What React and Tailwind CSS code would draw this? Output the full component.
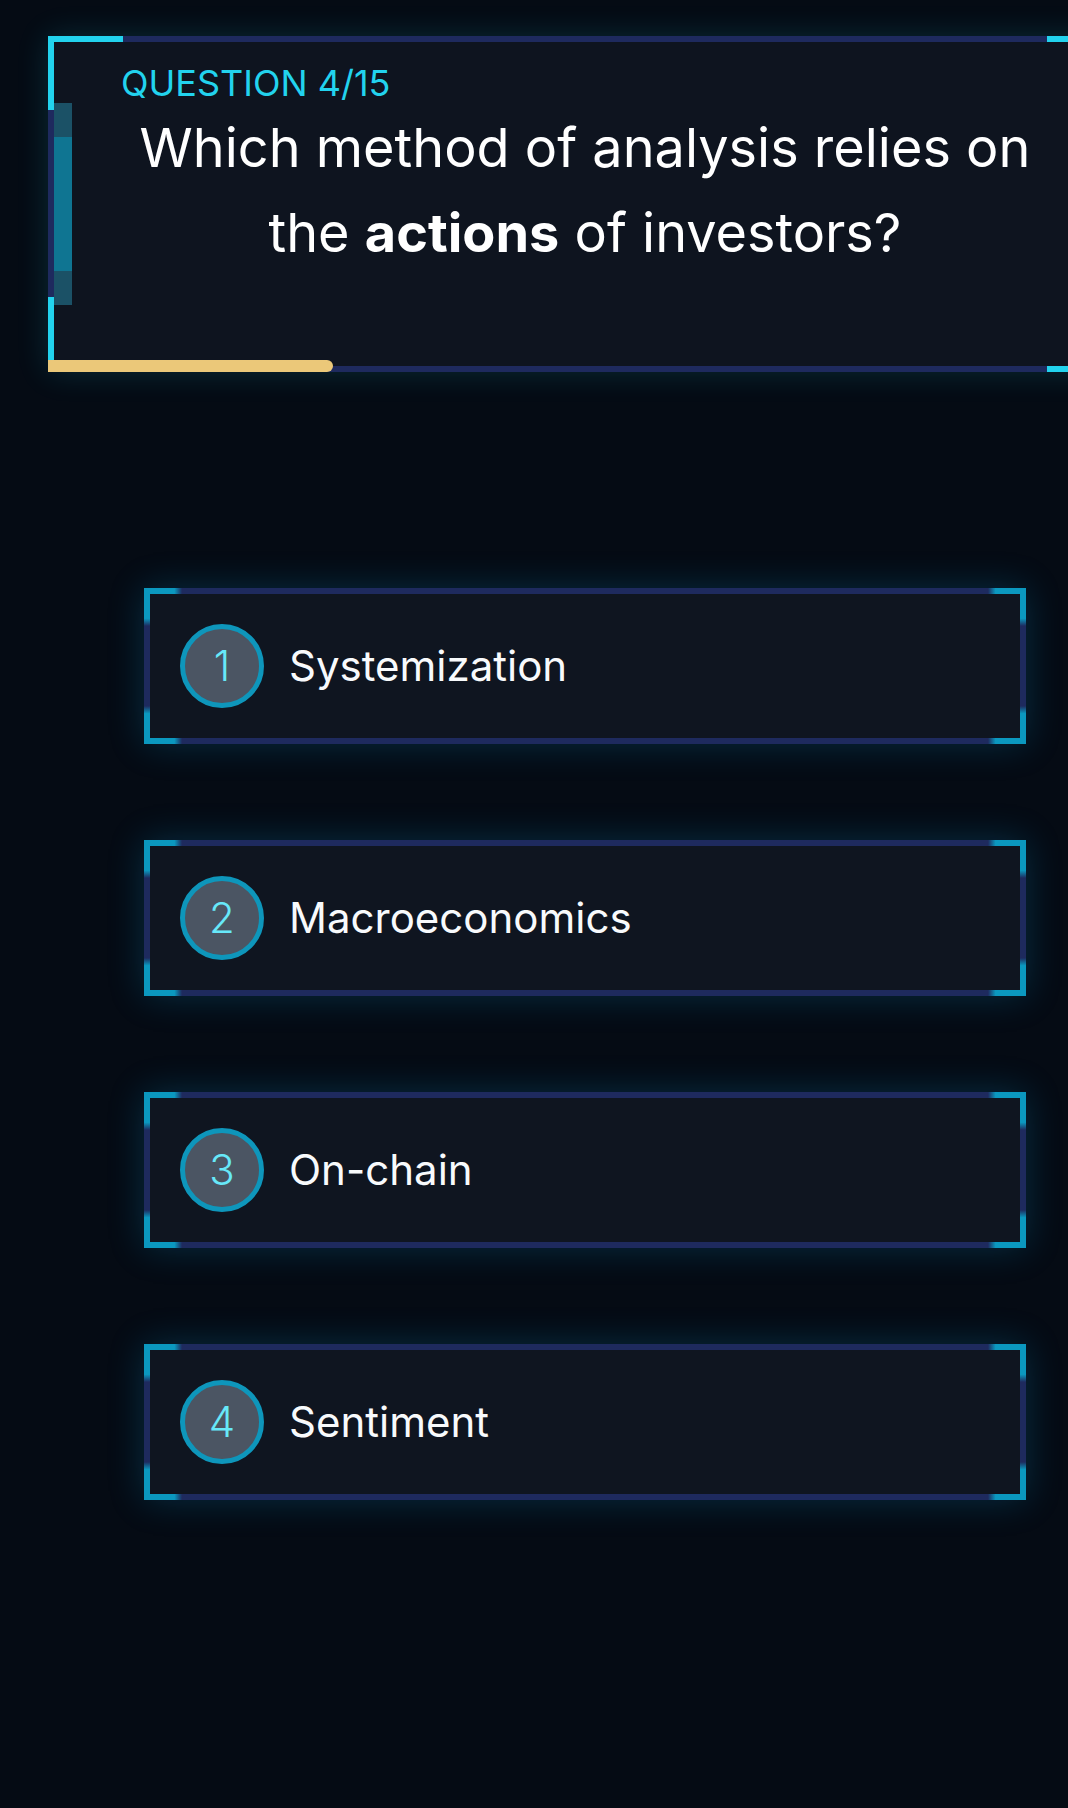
import React from 'react'

const options = ['Systemization', 'Macroeconomics', 'On-chain', 'Sentiment']

function Corner({ pos }) {
  // fading cyan corner pieces for the answer boxes
  const h = {
    tl: '-top-[6px] -left-[6px] bg-gradient-to-r',
    tr: '-top-[6px] -right-[6px] bg-gradient-to-l',
    bl: '-bottom-[6px] -left-[6px] bg-gradient-to-r',
    br: '-bottom-[6px] -right-[6px] bg-gradient-to-l',
  }[pos]
  const v = {
    tl: '-top-[6px] -left-[6px] bg-gradient-to-b',
    tr: '-top-[6px] -right-[6px] bg-gradient-to-b',
    bl: '-bottom-[6px] -left-[6px] bg-gradient-to-t',
    br: '-bottom-[6px] -right-[6px] bg-gradient-to-t',
  }[pos]
  return (
    <>
      <span className={`absolute ${h} w-[38px] h-[6px] from-[#0b98bf] from-80% to-transparent`} />
      <span className={`absolute ${v} w-[6px] h-[38px] from-[#0b98bf] from-80% to-transparent`} />
    </>
  )
}

function Option({ n, label }) {
  return (
    <div className="relative h-[156px] border-[6px] border-[#1e2a5e] bg-[#0f1520] shadow-[0_0_34px_rgba(14,165,233,0.22)] flex items-center pl-[30px] gap-[25px]">
      <Corner pos="tl" />
      <Corner pos="tr" />
      <Corner pos="bl" />
      <Corner pos="br" />
      <div className="w-[84px] h-[84px] rounded-full border-[5px] border-[#0e96bb] bg-[#4b5563] flex items-center justify-center text-[42px] font-light leading-none text-[#67e8f9]">
        {n}
      </div>
      <span className="text-[42px] text-[#f8fafc] leading-none">{label}</span>
    </div>
  )
}

export default function App() {
  return (
    <div className="min-h-screen w-full overflow-hidden bg-[#050b14] font-['Inter','Noto_Sans',sans-serif] pt-[36px]">
      <div className="ml-[48px] w-[1074px] h-[336px] relative border-[6px] border-[#1e2a5e] bg-[#0e141f] shadow-[0_0_30px_rgba(34,211,238,0.16)] px-[67px] pt-[19px]">
        {/* corner accents */}
        <span className="absolute -top-[6px] -left-[6px] w-[75px] h-[6px] bg-[#22d3ee]" />
        <span className="absolute -top-[6px] -left-[6px] w-[6px] h-[74px] bg-[#22d3ee]" />
        <span className="absolute -bottom-[6px] -left-[6px] w-[6px] h-[75px] bg-[#22d3ee]" />
        <span className="absolute -top-[6px] -right-[6px] w-[75px] h-[6px] bg-[#22d3ee]" />
        <span className="absolute -bottom-[6px] -right-[6px] w-[75px] h-[6px] bg-[#22d3ee]" />
        {/* side indicator */}
        <div className="absolute left-0 top-[61px] w-[18px] flex flex-col">
          <span className="h-[34px] bg-[#1b5166]" />
          <span className="h-[134px] bg-[#0f7592]" />
          <span className="h-[34px] bg-[#1b5166]" />
        </div>
        {/* progress */}
        <span className="absolute -bottom-[6px] -left-[6px] w-[285px] h-[12px] rounded-r-full bg-[#ebc879]" />

        <p className="text-[36px] leading-[44px] text-[#22d3ee]">QUESTION 4/15</p>
        <h1 className="text-[54px] leading-[85px] text-white text-center">
          Which method of analysis relies on the <b className="font-bold">actions</b> of investors?
        </h1>
      </div>

      <div className="ml-[144px] w-[882px] mt-[216px] flex flex-col gap-[96px] pb-[100px]">
        {options.map((o, i) => (
          <Option key={o} n={i + 1} label={o} />
        ))}
      </div>
    </div>
  )
}
